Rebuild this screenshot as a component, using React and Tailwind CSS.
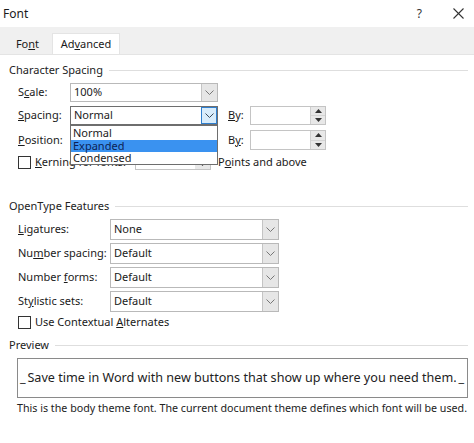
import React from 'react'

const font = { fontFamily: '"Noto Sans", "Open Sans", sans-serif' }

function Chevron({ color = '#6d6d6d' }) {
  return (
    <svg width="9" height="5" viewBox="0 0 9 5" fill="none">
      <polyline points="0.5,0.5 4.5,4.5 8.5,0.5" stroke={color} strokeWidth="1" />
    </svg>
  )
}

function Combo({ value, width, height = 'h-[19px]', active }) {
  return (
    <div
      className={`${width} ${height} flex items-stretch border bg-white ${active ? 'border-[#6e6e6e]' : 'border-[#b9b9b9]'}`}
    >
      <div className="flex-1 flex items-center pl-[3px] text-[11px] text-[#1a1a1a]">{value}</div>
      <div
        className={`w-[16px] flex items-center justify-center border-l ${
          active ? 'bg-[#d8ecfb] border border-[#2f7fcf]' : 'bg-[#e6e6e6] border-[#c4c4c4]'
        }`}
      >
        <Chevron color={active ? '#3a4a5a' : '#777777'} />
      </div>
    </div>
  )
}

function Spinner({ width = 'w-[76px]', height = 'h-[19px]' }) {
  return (
    <div className={`${width} ${height} flex items-stretch border border-[#c4c4c4] bg-white`}>
      <div className="flex-1" />
      <div className="w-[15px] flex flex-col bg-[#e8e8e8] border-l border-[#cfcfcf]">
        <div className="flex-1 flex items-center justify-center border-b border-[#d4d4d4]">
          <svg width="7" height="4" viewBox="0 0 7 4"><polygon points="0,4 3.5,0 7,4" fill="#333" /></svg>
        </div>
        <div className="flex-1 flex items-center justify-center">
          <svg width="7" height="4" viewBox="0 0 7 4"><polygon points="0,0 3.5,4 7,0" fill="#333" /></svg>
        </div>
      </div>
    </div>
  )
}

function GroupHeader({ title }) {
  return (
    <div className="h-[16px] flex items-center gap-[6px] pl-[9px] pr-[6px]">
      <span className="text-[11px] text-[#222]">{title}</span>
      <div className="flex-1 h-px bg-[#dedede]" />
    </div>
  )
}

function Checkbox() {
  return <div className="w-[13px] h-[13px] border border-[#333] bg-white shrink-0" />
}

export default function App() {
  return (
    <div className="w-[474px] h-[443px] bg-white relative overflow-hidden text-[#1a1a1a]" style={font}>
      {/* Title bar */}
      <div className="h-[27px] flex items-center justify-between pl-[3px] pr-[10px]">
        <span className="text-[12px]">Font</span>
        <div className="flex items-center gap-[31px]">
          <span className="text-[12px] text-[#333]">?</span>
          <svg width="11" height="11" viewBox="0 0 11 11">
            <line x1="0.5" y1="0.5" x2="10.5" y2="10.5" stroke="#333" strokeWidth="1.1" />
            <line x1="10.5" y1="0.5" x2="0.5" y2="10.5" stroke="#333" strokeWidth="1.1" />
          </svg>
        </div>
      </div>

      {/* Tabs */}
      <div className="h-[28px] bg-[#f0f0f0] flex items-end pl-[3px] border-b border-[#e4e4e4]">
        <div className="w-[49px] h-[20px] flex items-center justify-center text-[11px]">
          <span>
            Fo<u>n</u>t
          </span>
        </div>
        <div className="w-[68px] h-[21px] bg-white flex items-center justify-center text-[11px] border-x border-t border-[#e4e4e4]">
          <span>
            Ad<u>v</u>anced
          </span>
        </div>
      </div>

      {/* Character Spacing */}
      <div className="mt-[7px]">
        <GroupHeader title="Character Spacing" />
      </div>
      <div className="pl-[18px] flex flex-col">
        <div className="mt-[5px] h-[19px] flex items-center">
          <span className="w-[52px] text-[11px]">
            S<u>c</u>ale:
          </span>
          <Combo value="100%" width="w-[148px]" />
        </div>
        <div className="mt-[4px] h-[19px] flex items-center">
          <span className="w-[52px] text-[11px]">
            <u>S</u>pacing:
          </span>
          <Combo value="Normal" width="w-[148px]" active />
          <span className="ml-[10px] w-[22px] text-[11px]">
            <u>B</u>y:
          </span>
          <Spinner />
        </div>
        <div className="mt-[5px] h-[20px] flex items-center">
          <span className="w-[52px] text-[11px]">
            <u>P</u>osition:
          </span>
          <Combo value="" width="w-[148px]" height="h-[20px]" />
          <span className="ml-[10px] w-[22px] text-[11px]">
            B<u>y</u>:
          </span>
          <Spinner height="h-[20px]" />
        </div>
        <div className="mt-[4px] h-[16px] flex items-center">
          <Checkbox />
          <span className="ml-[4px] w-[100px] text-[11px] whitespace-nowrap">
            <u>K</u>erning for fonts:
          </span>
          <div className="w-[76px] h-[16px] flex items-stretch border border-[#c4c4c4] bg-white">
            <div className="flex-1" />
            <div className="w-[15px] flex items-end justify-center bg-[#e8e8e8] pb-[3px]">
              <svg width="7" height="4" viewBox="0 0 7 4"><polygon points="0,0 3.5,4 7,0" fill="#333" /></svg>
            </div>
          </div>
          <span className="ml-[7px] text-[11px]">
            P<u>o</u>ints and above
          </span>
        </div>
      </div>

      {/* OpenType Features */}
      <div className="mt-[28px]">
        <GroupHeader title="OpenType Features" />
      </div>
      <div className="pl-[18px] flex flex-col gap-[3px] mt-[5px]">
        {[
          { label: <><u>L</u>igatures:</>, value: 'None' },
          { label: <>Nu<u>m</u>ber spacing:</>, value: 'Default' },
          { label: <>Number <u>f</u>orms:</>, value: 'Default' },
          { label: <>St<u>y</u>listic sets:</>, value: 'Default' },
        ].map((row, i) => (
          <div key={i} className="h-[21px] flex items-center">
            <span className="w-[92px] text-[11px]">{row.label}</span>
            <Combo value={row.value} width="w-[169px]" height="h-[21px]" />
          </div>
        ))}
        <div className="h-[15px] flex items-center">
          <Checkbox />
          <span className="ml-[4px] text-[11px]">
            Use Contextual <u>A</u>lternates
          </span>
        </div>
      </div>

      {/* Preview */}
      <div className="mt-[7px]">
        <GroupHeader title="Preview" />
      </div>
      <div className="ml-[17px] mr-[6px] mt-[5px] h-[40px] border border-[#8a8a8a] flex items-center justify-between pl-[2px] pr-[3px] text-[12.6px] text-[#222] whitespace-nowrap">
        <span>_</span>
        <span>Save time in Word with new buttons that show up where you need them.</span>
        <span>_</span>
      </div>
      <div className="ml-[17px] mt-[3px] h-[14px] flex items-center text-[10.7px] text-[#222] whitespace-nowrap">
        This is the body theme font. The current document theme defines which font will be used.
      </div>

      {/* Open dropdown list */}
      <div className="absolute left-[70px] top-[125px] w-[148px] h-[40px] bg-white border border-[#6e6e6e] flex flex-col pt-[1px]">
        <div className="h-[12.5px] flex items-center pl-[2px] text-[11px]">Normal</div>
        <div className="h-[12.5px] flex items-center pl-[2px] text-[11px] bg-[#3a92f0] text-[#0d1f55]">Expanded</div>
        <div className="h-[12.5px] flex items-center pl-[2px] text-[11px]">Condensed</div>
      </div>
    </div>
  )
}
